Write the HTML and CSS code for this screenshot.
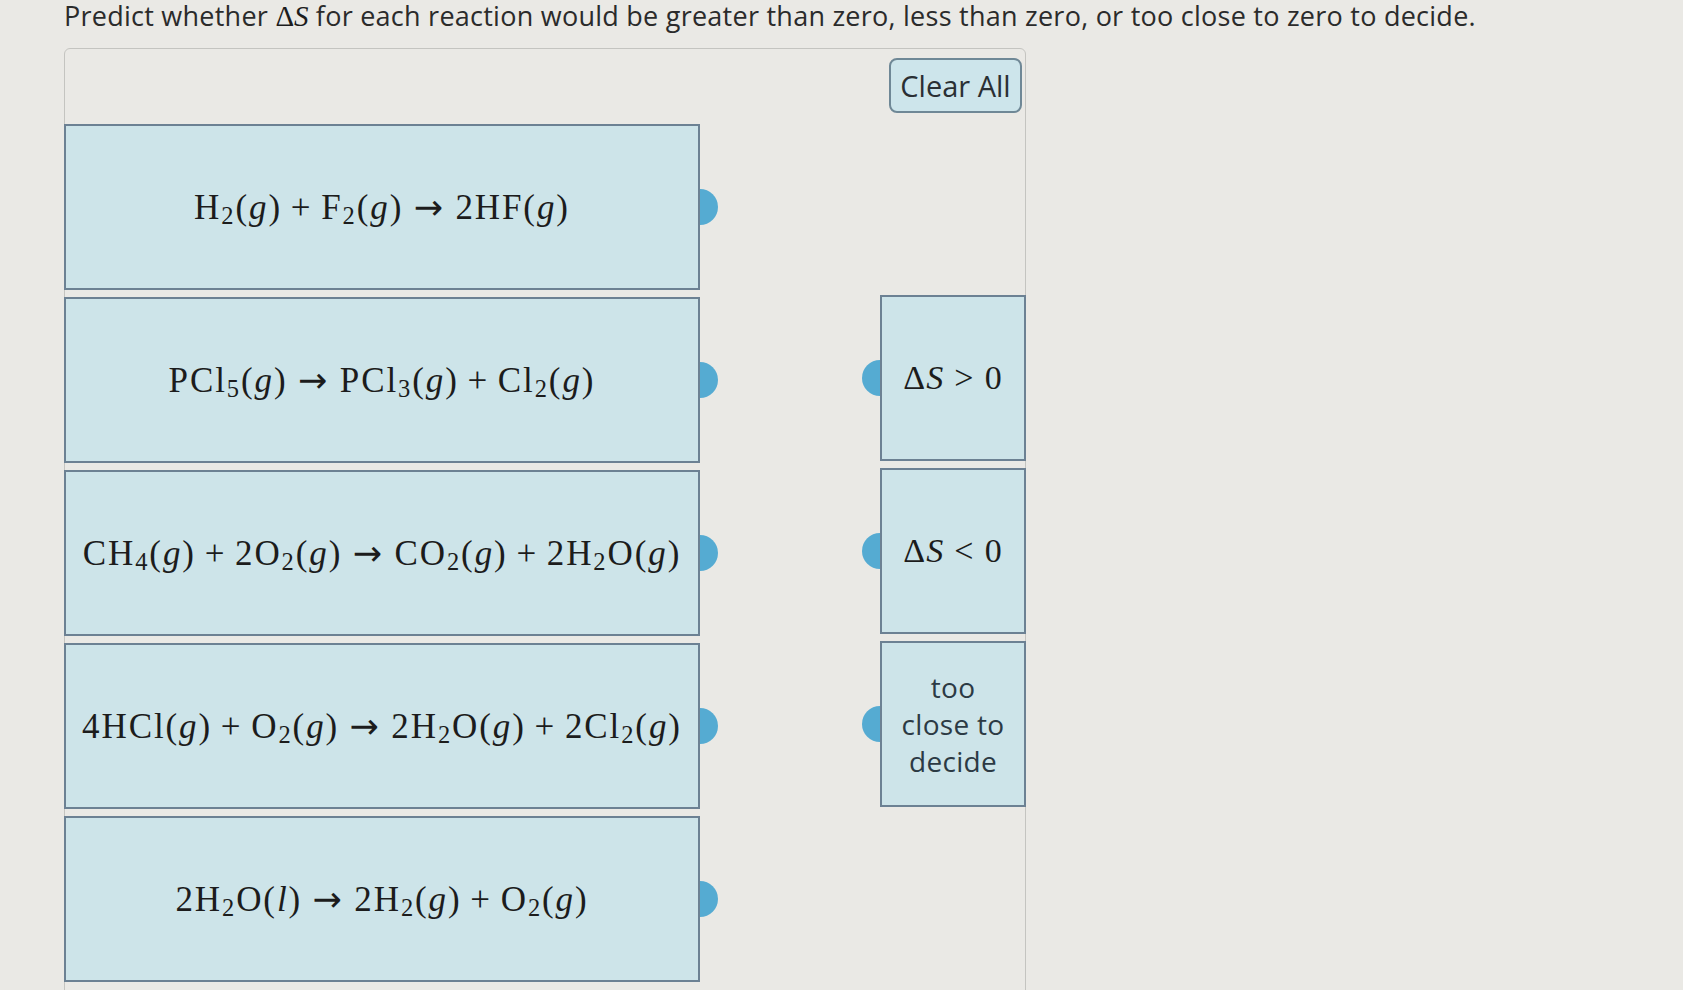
FILE: index.html
```html
<!DOCTYPE html>
<html lang="en">
<head>
  <meta charset="UTF-8">
  <meta name="viewport" content="width=device-width, initial-scale=1.0">
  <title>Entropy change</title>
  <link rel="stylesheet" href="styles.css">
</head>
<body>

  <p class="prompt">Predict whether <span class="math">&Delta;<i>S</i></span> for each reaction would be greater than zero, less than zero, or too close to zero to decide.</p>

  <div id="sortPanel">
    <div class="toolbar">
      <button class="clear-btn">Clear All</button>
    </div>

    <div class="row">
      <div class="item reaction">
        <span class="math">H<sub>2</sub>(<i>g</i>)<span class="op">+</span>F<sub>2</sub>(<i>g</i>)<span class="arrow">&rarr;</span>2HF(<i>g</i>)</span>
      </div>
    </div>

    <div class="row">
      <div class="item reaction">
        <span class="math">PCl<sub>5</sub>(<i>g</i>)<span class="arrow">&rarr;</span>PCl<sub>3</sub>(<i>g</i>)<span class="op">+</span>Cl<sub>2</sub>(<i>g</i>)</span>
      </div>
      <div class="item target">
        <span class="math">&Delta;<i>S</i><span class="op">&gt;</span>0</span>
      </div>
    </div>

    <div class="row">
      <div class="item reaction">
        <span class="math">CH<sub>4</sub>(<i>g</i>)<span class="op">+</span>2O<sub>2</sub>(<i>g</i>)<span class="arrow">&rarr;</span>CO<sub>2</sub>(<i>g</i>)<span class="op">+</span>2H<sub>2</sub>O(<i>g</i>)</span>
      </div>
      <div class="item target">
        <span class="math">&Delta;<i>S</i><span class="op">&lt;</span>0</span>
      </div>
    </div>

    <div class="row">
      <div class="item reaction">
        <span class="math">4HCl(<i>g</i>)<span class="op">+</span>O<sub>2</sub>(<i>g</i>)<span class="arrow">&rarr;</span>2H<sub>2</sub>O(<i>g</i>)<span class="op">+</span>2Cl<sub>2</sub>(<i>g</i>)</span>
      </div>
      <div class="item target">
        <span class="label">too<br>close to<br>decide</span>
      </div>
    </div>

    <div class="row">
      <div class="item reaction">
        <span class="math">2H<sub>2</sub>O(<i>l</i>)<span class="arrow">&rarr;</span>2H<sub>2</sub>(<i>g</i>)<span class="op">+</span>O<sub>2</sub>(<i>g</i>)</span>
      </div>
    </div>
  </div>

</body>
</html>
```

FILE: styles.css
```css
body, html {
  margin: 0;
  height: 100%;
  overflow: hidden;
}

body {
  background: #eae9e5;
  font-family: "Open Sans", "Liberation Sans", sans-serif;
  color: #2b2b2b;
}

.prompt {
  margin: 0;
  padding-left: 64px;
  font-size: 27px;
  line-height: 37px;
  letter-spacing: 0.25px;
  white-space: nowrap;
  margin-top: -3px;
}

.prompt .math {
  font-size: 29px;
  letter-spacing: 0;
}

.math {
  font-family: "Liberation Serif", "DejaVu Serif", serif;
  color: #1c1c1c;
  white-space: nowrap;
}

.math sub {
  font-size: 0.7em;
  vertical-align: -0.22em;
  line-height: 0;
}

.math .op {
  margin: 0 0.25em;
}

.math .arrow {
  font-family: "DejaVu Sans", sans-serif;
  font-size: 1em;
  margin: 0 0.3em;
}

/* the drag-and-drop area */
#sortPanel {
  margin: 13px 0 0 64px;
  width: 962px;
  height: 960px;
  border: 1px solid #c4c4c0;
  border-radius: 6px;
  box-sizing: border-box;
  display: flex;
  flex-direction: column;
  gap: 7px;
}

.toolbar {
  display: flex;
  justify-content: flex-end;
  padding: 9px 3px 4px 0;
}

.clear-btn {
  font-family: "Open Sans", "Liberation Sans", sans-serif;
  font-size: 29px;
  color: #2a2f33;
  background: #cde5eb;
  border: 2px solid #6f8896;
  border-radius: 8px;
  height: 55px;
  width: 133px;
  padding: 0;
}

.row {
  display: flex;
  justify-content: space-between;
  margin-left: -1px;
  margin-right: -1px;
}

.item {
  position: relative;
  height: 166px;
  box-sizing: border-box;
  background: #cde4e9;
  border: 2px solid #6c8193;
  display: flex;
  align-items: center;
  justify-content: center;
}

.reaction {
  width: 636px;
}

.reaction .math {
  font-size: 35px;
  letter-spacing: 1.9px;
}

/* connector tabs */
.reaction::after,
.target::before {
  content: "";
  position: absolute;
  top: 50%;
  width: 18px;
  height: 36px;
  margin-top: -18px;
  background: #55abd2;
}

.reaction::after {
  right: -20px;
  border-radius: 0 18px 18px 0;
}

.target::before {
  left: -20px;
  border-radius: 18px 0 0 18px;
}

.target {
  width: 146px;
  margin-top: -2px;
}

.target .math {
  font-size: 34px;
  letter-spacing: 1px;
}

.target .math .op {
  margin: 0 0.3em;
}

.label {
  font-size: 28px;
  line-height: 37px;
  text-align: center;
  color: #2c3a44;
  letter-spacing: 0.3px;
}
```
